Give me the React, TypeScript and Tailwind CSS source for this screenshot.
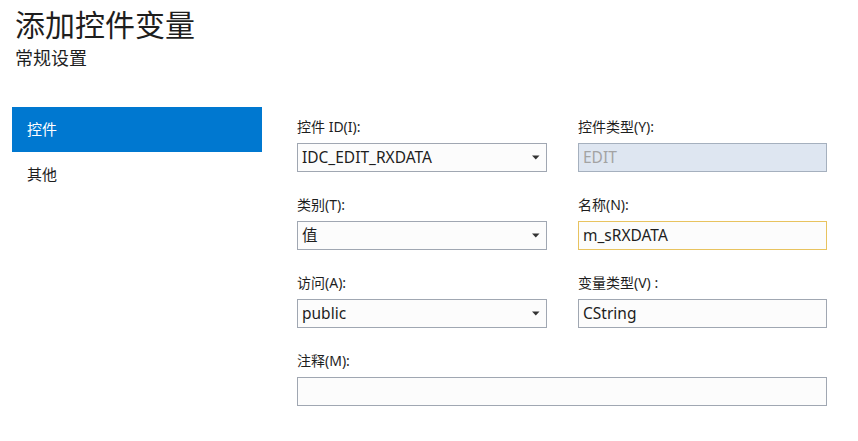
import React from "react";

const FONT = { fontFamily: '"Noto Sans", "Noto Sans CJK SC", sans-serif' };

function Arrow() {
  return (
    <svg width="8" height="5" viewBox="0 0 8 5" className="shrink-0">
      <path d="M0 0.5h7.5L3.75 4.5z" fill="#333" />
    </svg>
  );
}

function Field({
  label,
  value,
  select,
  disabled,
  focused,
  className = "",
}: {
  label: string;
  value?: string;
  select?: boolean;
  disabled?: boolean;
  focused?: boolean;
  className?: string;
}) {
  const box = disabled
    ? "bg-[#dee6f1] border-[#a5b0be] text-[#a3a3a3]"
    : focused
    ? "bg-[#fcfcfc] border-[#e8c35f] text-[#1e1e1e]"
    : "bg-[#fcfcfc] border-[#a0a7b2] text-[#1e1e1e]";
  return (
    <div className={`flex flex-col ${className}`}>
      <div className="text-[14px] leading-[20px] text-[#1e1e1e] h-[20px]">{label}</div>
      <div className={`mt-[6px] h-[29px] border flex items-center pl-[4px] pr-[6px] text-[15.5px] ${box}`}>
        <span className="flex-1 truncate">{value}</span>
        {select && <Arrow />}
      </div>
    </div>
  );
}

export default function App() {
  return (
    <div className="w-[858px] h-[441px] bg-white overflow-hidden" style={FONT}>
      <div className="pl-[15px] pt-[7px]">
        <div className="text-[30px] leading-[36px] text-[#1e1e1e]">添加控件变量</div>
        <div className="text-[18px] leading-[24px] text-[#1e1e1e] mt-[3px]">常规设置</div>
      </div>

      <div className="flex mt-[37px]">
        <div className="w-[250px] ml-[12px] shrink-0">
          <div className="h-[45px] bg-[#0078d0] text-white text-[15px] flex items-center pl-[15px]">控件</div>
          <div className="h-[45px] text-[#1e1e1e] text-[15px] flex items-center pl-[15px]">其他</div>
        </div>

        <div className="ml-[35px] mt-[10px] grid grid-cols-[250px_249px] gap-x-[31px] gap-y-[23px]">
          <Field label="控件 ID(I):" value="IDC_EDIT_RXDATA" select />
          <Field label="控件类型(Y):" value="EDIT" disabled />
          <Field label="类别(T):" value="值" select />
          <Field label="名称(N):" value="m_sRXDATA" focused />
          <Field label="访问(A):" value="public" select />
          <Field label="变量类型(V) :" value="CString" />
          <Field label="注释(M):" value="" className="col-span-2" />
        </div>
      </div>
    </div>
  );
}
